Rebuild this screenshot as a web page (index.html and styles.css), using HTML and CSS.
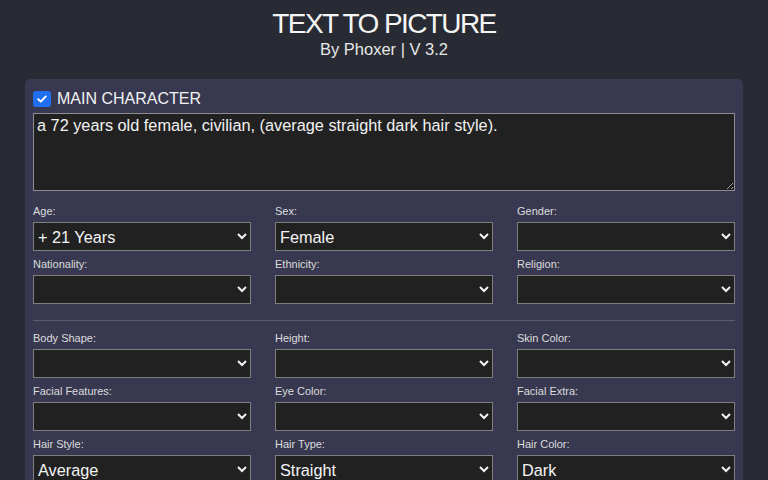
FILE: index.html
```html
<!DOCTYPE html>
<html lang="en">
<head>
<meta charset="utf-8">
<title>Text to Picture</title>
<link rel="stylesheet" href="styles.css">
</head>
<body>
<header class="top">
  <h1 class="title">TEXT TO PICTURE</h1>
  <p class="subtitle">By Phoxer | V 3.2</p>
</header>
<main class="panel">
  <label class="panel-head">
    <span class="check"><svg width="10" height="8" viewBox="0 0 10 8"><path d="M1.2 4.2 L3.8 6.6 L8.8 1.4" fill="none" stroke="#fff" stroke-width="1.9" stroke-linecap="round" stroke-linejoin="round"/></svg></span>
    <span class="panel-title">MAIN CHARACTER</span>
  </label>
  <textarea class="prompt">a 72 years old female, civilian, (average straight dark hair style).</textarea>

  <div class="fields first">
    <div class="field"><label class="lbl">Age:</label><select class="sel"><option>+ 21 Years</option></select></div>
    <div class="field"><label class="lbl">Sex:</label><select class="sel"><option>Female</option></select></div>
    <div class="field"><label class="lbl">Gender:</label><select class="sel"><option></option></select></div>
    <div class="field"><label class="lbl">Nationality:</label><select class="sel"><option></option></select></div>
    <div class="field"><label class="lbl">Ethnicity:</label><select class="sel"><option></option></select></div>
    <div class="field"><label class="lbl">Religion:</label><select class="sel"><option></option></select></div>
  </div>

  <hr class="sep">

  <div class="fields">
    <div class="field"><label class="lbl">Body Shape:</label><select class="sel"><option></option></select></div>
    <div class="field"><label class="lbl">Height:</label><select class="sel"><option></option></select></div>
    <div class="field"><label class="lbl">Skin Color:</label><select class="sel"><option></option></select></div>
    <div class="field"><label class="lbl">Facial Features:</label><select class="sel"><option></option></select></div>
    <div class="field"><label class="lbl">Eye Color:</label><select class="sel"><option></option></select></div>
    <div class="field"><label class="lbl">Facial Extra:</label><select class="sel"><option></option></select></div>
    <div class="field"><label class="lbl">Hair Style:</label><select class="sel"><option>Average</option></select></div>
    <div class="field"><label class="lbl">Hair Type:</label><select class="sel"><option>Straight</option></select></div>
    <div class="field"><label class="lbl">Hair Color:</label><select class="sel"><option>Dark</option></select></div>
  </div>
</main>
</body>
</html>
```
FILE: styles.css
```css
html, body {
  margin: 0;
  padding: 0;
}
body {
  background: #282b33;
  color: #f2f2f2;
  font-family: "Liberation Sans", Arial, sans-serif;
  overflow: hidden;
}
.top {
  text-align: center;
  padding-top: 7px;
}
.title {
  margin: 0;
  font-size: 28px;
  line-height: 33px;
  font-weight: normal;
  letter-spacing: -1.6px;
  color: #f4f4f4;
}
.subtitle {
  margin: 0;
  font-size: 16.5px;
  line-height: 19px;
  color: #e6e6e6;
}
.panel {
  margin: 20px 25px 0 25px;
  background: #383950;
  border-radius: 5px;
  padding: 12px 8px 20px 8px;
}
.panel-head {
  display: flex;
  align-items: center;
  height: 16px;
  margin-bottom: 6px;
}
.check {
  width: 18px;
  height: 16px;
  border-radius: 3px;
  background: #1f6ff0;
  display: flex;
  align-items: center;
  justify-content: center;
  margin-right: 6px;
}
.panel-title {
  font-size: 16px;
  line-height: 16px;
  color: #f2f2f2;
}
.prompt {
  display: block;
  box-sizing: border-box;
  width: 100%;
  height: 78px;
  margin: 0;
  padding: 2px 2px 2px 3px;
  background: #212121;
  color: #f2f2f2;
  border: 1px solid #8d8d8d;
  border-radius: 0;
  font-family: "Liberation Sans", Arial, sans-serif;
  font-size: 16.3px;
  resize: vertical;
  color-scheme: dark;
}
.fields {
  display: grid;
  grid-template-columns: 1fr 1fr 1fr;
  column-gap: 24px;
  row-gap: 7px;
}
.fields.first {
  margin-top: 14px;
}
.field {
  display: flex;
  flex-direction: column;
}
.lbl {
  font-size: 11px;
  line-height: 13px;
  color: #dcdcdc;
  margin-bottom: 4px;
}
.sel {
  box-sizing: border-box;
  height: 29px;
  width: 100%;
  margin: 0;
  background: #212121;
  color: #f4f4f4;
  border: 1px solid #7e7e7e;
  border-radius: 0;
  font-family: "Liberation Sans", Arial, sans-serif;
  font-size: 16.3px;
  padding: 0;
  color-scheme: dark;
}
.sep {
  margin: 16px 0 11px 0;
  border: 0;
  height: 1px;
  background: #5b5c74;
}
```
